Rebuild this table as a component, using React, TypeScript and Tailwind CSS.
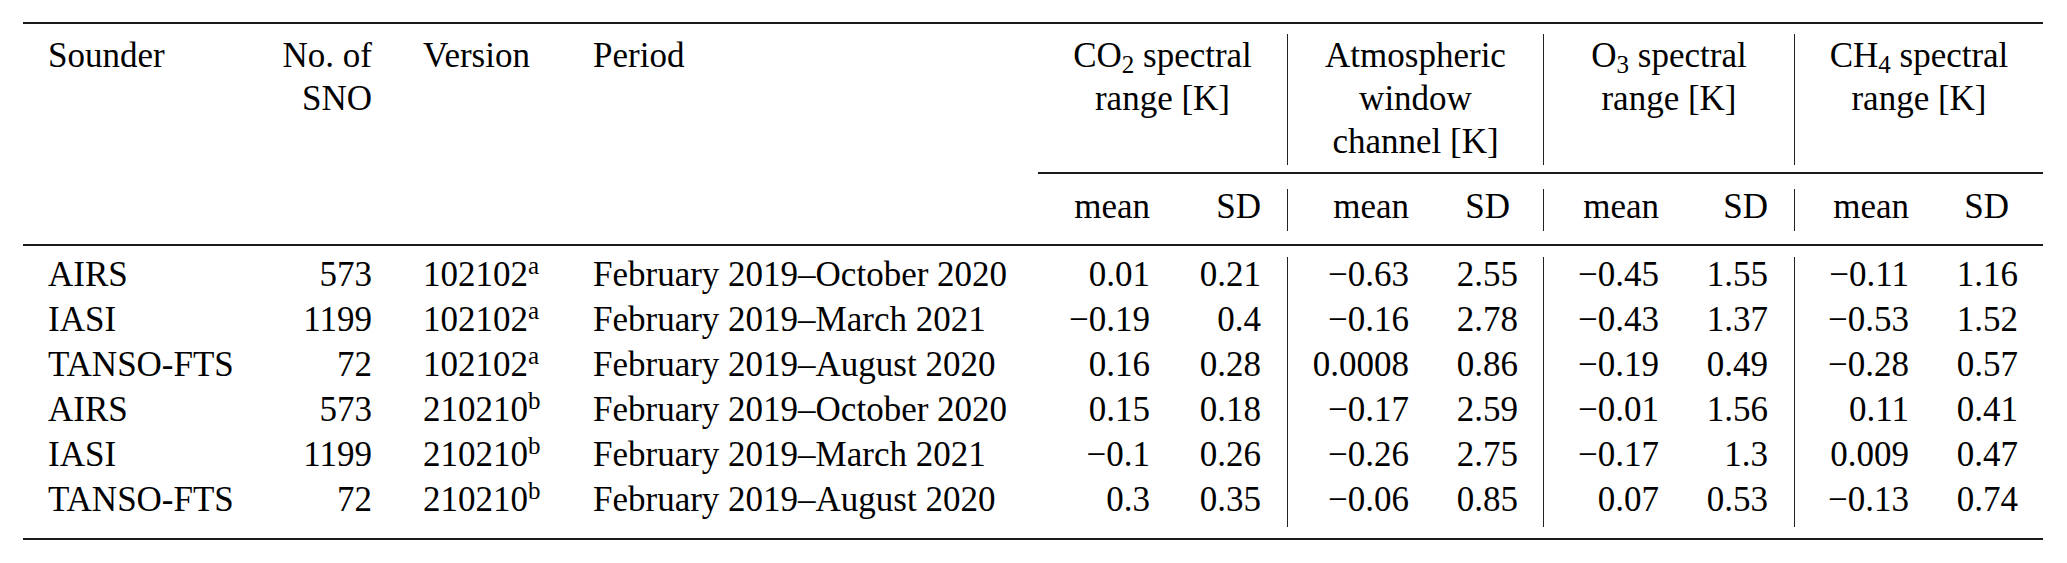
import React from "react";

type Row = {
  s: string;
  n: string;
  v: string;
  sup: string;
  p: string;
  vals: string[];
};

const rows: Row[] = [
  { s: "AIRS", n: "573", v: "102102", sup: "a", p: "February 2019–October 2020", vals: ["0.01", "0.21", "−0.63", "2.55", "−0.45", "1.55", "−0.11", "1.16"] },
  { s: "IASI", n: "1199", v: "102102", sup: "a", p: "February 2019–March 2021", vals: ["−0.19", "0.4", "−0.16", "2.78", "−0.43", "1.37", "−0.53", "1.52"] },
  { s: "TANSO-FTS", n: "72", v: "102102", sup: "a", p: "February 2019–August 2020", vals: ["0.16", "0.28", "0.0008", "0.86", "−0.19", "0.49", "−0.28", "0.57"] },
  { s: "AIRS", n: "573", v: "210210", sup: "b", p: "February 2019–October 2020", vals: ["0.15", "0.18", "−0.17", "2.59", "−0.01", "1.56", "0.11", "0.41"] },
  { s: "IASI", n: "1199", v: "210210", sup: "b", p: "February 2019–March 2021", vals: ["−0.1", "0.26", "−0.26", "2.75", "−0.17", "1.3", "0.009", "0.47"] },
  { s: "TANSO-FTS", n: "72", v: "210210", sup: "b", p: "February 2019–August 2020", vals: ["0.3", "0.35", "−0.06", "0.85", "0.07", "0.53", "−0.13", "0.74"] },
];

const GRID =
  "grid grid-cols-[227px_122px_221px_445px_112px_137px_122px_134px_116px_135px_115px_134px]";

export default function App() {
  return (
    <div className="w-[2067px] h-[563px] bg-white text-black font-serif text-[35px] overflow-hidden">
      <div className="ml-[23px] w-[2020px] pt-[22px] font-[family-name:Liberation_Serif,serif]">
        {/* top rule */}
        <div className="h-[2px] bg-[#1a1a1a]" />

        {/* header row 1 */}
        <div className={`${GRID} mt-[10px] h-[131px] leading-[43px]`}>
          <div className="pl-[25px]">Sounder</div>
          <div className="text-right">
            No. of
            <br />
            SNO
          </div>
          <div className="pl-[51px]">Version</div>
          <div>Period</div>
          <div className="col-span-2 text-center">
            CO<sub className="text-[25px]">2</sub> spectral
            <br />
            range [K]
          </div>
          <div className="col-span-2 text-center border-l border-[#222]">
            Atmospheric
            <br />
            window
            <br />
            channel [K]
          </div>
          <div className="col-span-2 text-center border-l border-[#222]">
            O<sub className="text-[25px]">3</sub> spectral
            <br />
            range [K]
          </div>
          <div className="col-span-2 text-center border-l border-[#222]">
            CH<sub className="text-[25px]">4</sub> spectral
            <br />
            range [K]
          </div>
        </div>

        {/* cmidrule */}
        <div className="mt-[7px] ml-[1015px] h-[2px] bg-[#1a1a1a]" />

        {/* header row 2 */}
        <div className={`${GRID} mt-[15px] h-[42px] leading-[36px]`}>
          <div />
          <div />
          <div />
          <div />
          <div className="text-right">mean</div>
          <div className="text-right pr-[26px]">SD</div>
          <div className="text-right border-l border-[#222]">mean</div>
          <div className="text-right pr-[33px]">SD</div>
          <div className="text-right border-l border-[#222]">mean</div>
          <div className="text-right pr-[26px]">SD</div>
          <div className="text-right border-l border-[#222]">mean</div>
          <div className="text-right pr-[34px]">SD</div>
        </div>

        {/* header rule */}
        <div className="mt-[13px] h-[2px] bg-[#1a1a1a]" />

        {/* data */}
        <div className="mt-[11px]">
          {rows.map((r, i) => (
            <div key={i} className={`${GRID} h-[45px] leading-[35px]`}>
              <div className="pl-[25px] whitespace-nowrap">{r.s}</div>
              <div className="text-right">{r.n}</div>
              <div className="pl-[51px] whitespace-nowrap">
                {r.v}
                <sup className="text-[25px]">{r.sup}</sup>
              </div>
              <div className="whitespace-nowrap">{r.p}</div>
              <div className="text-right">{r.vals[0]}</div>
              <div className="text-right pr-[26px]">{r.vals[1]}</div>
              <div className="text-right border-l border-[#222]">{r.vals[2]}</div>
              <div className="text-right pr-[25px]">{r.vals[3]}</div>
              <div className="text-right border-l border-[#222]">{r.vals[4]}</div>
              <div className="text-right pr-[26px]">{r.vals[5]}</div>
              <div className="text-right border-l border-[#222]">{r.vals[6]}</div>
              <div className="text-right pr-[25px]">{r.vals[7]}</div>
            </div>
          ))}
        </div>

        {/* bottom rule */}
        <div className="mt-[11px] h-[2px] bg-[#1a1a1a]" />
      </div>
    </div>
  );
}
